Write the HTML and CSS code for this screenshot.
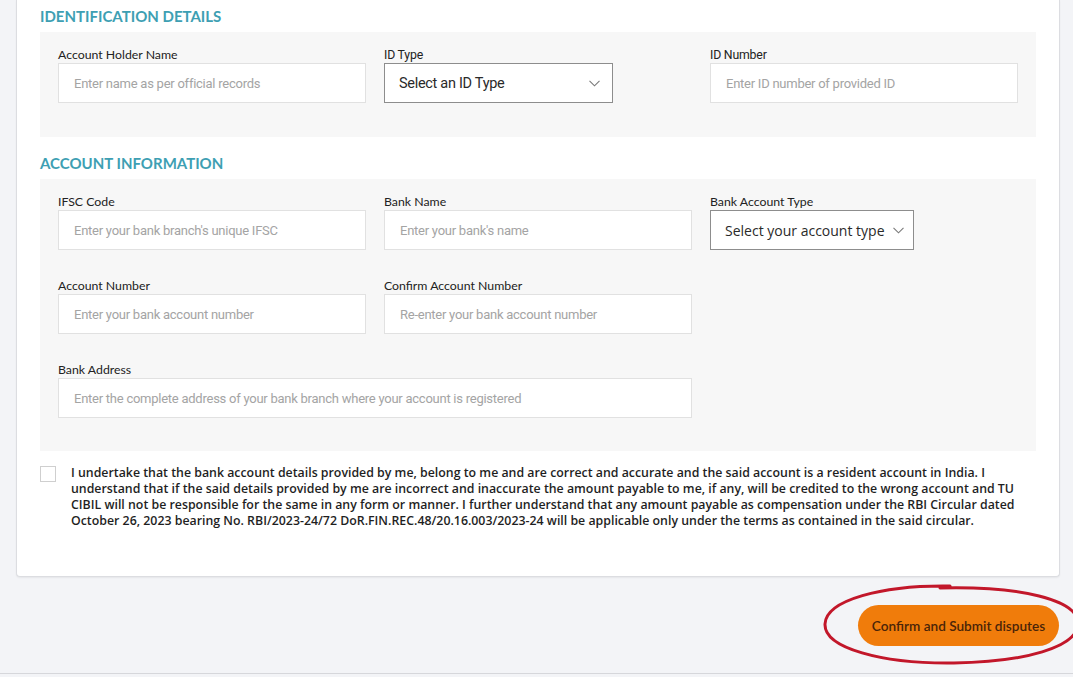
FILE: index.html
```html
<!DOCTYPE html>
<html>
<head>
<meta charset="utf-8">
<link rel="stylesheet" href="styles.css">
</head>
<body>
<div class="page">
  <div class="card">
    <h2 class="section-title">IDENTIFICATION DETAILS</h2>
    <div class="panel">
      <div class="row">
        <div class="field">
          <label class="label">Account Holder Name</label>
          <div class="input"><span class="ph">Enter name as per official records</span></div>
        </div>
        <div class="field">
          <label class="label cond">ID Type</label>
          <div class="select sel-id"><span class="sel-text cond">Select an ID Type</span>
            <svg class="chev" width="11" height="7" viewBox="0 0 11 7"><path d="M0.5 0.8 L5.5 5.8 L10.5 0.8" fill="none" stroke="#7a7a7a" stroke-width="1.1"/></svg>
          </div>
        </div>
        <div class="field">
          <label class="label cond">ID Number</label>
          <div class="input"><span class="ph">Enter ID number of provided ID</span></div>
        </div>
      </div>
    </div>

    <h2 class="section-title second">ACCOUNT INFORMATION</h2>
    <div class="panel panel-account">
      <div class="row">
        <div class="field">
          <label class="label">IFSC Code</label>
          <div class="input"><span class="ph">Enter your bank branch's unique IFSC</span></div>
        </div>
        <div class="field">
          <label class="label">Bank Name</label>
          <div class="input"><span class="ph">Enter your bank's name</span></div>
        </div>
        <div class="field">
          <label class="label">Bank Account Type</label>
          <div class="select sel-acct"><span class="sel-text">Select your account type</span>
            <svg class="chev" width="11" height="7" viewBox="0 0 11 7"><path d="M0.5 0.8 L5.5 5.8 L10.5 0.8" fill="none" stroke="#7a7a7a" stroke-width="1.1"/></svg>
          </div>
        </div>
      </div>
      <div class="row">
        <div class="field">
          <label class="label">Account Number</label>
          <div class="input"><span class="ph">Enter your bank account number</span></div>
        </div>
        <div class="field">
          <label class="label">Confirm Account Number</label>
          <div class="input"><span class="ph">Re-enter your bank account number</span></div>
        </div>
      </div>
      <div class="row">
        <div class="field wide">
          <label class="label">Bank Address</label>
          <div class="input"><span class="ph">Enter the complete address of your bank branch where your account is registered</span></div>
        </div>
      </div>
    </div>

    <div class="consent">
      <span class="checkbox"></span>
      <p class="consent-text">I undertake that the bank account details provided by me, belong to me and are correct and accurate and the said account is a resident account in India. I understand that if the said details provided by me are incorrect and inaccurate the amount payable to me, if any, will be credited to the wrong account and TU CIBIL will not be responsible for the same in any form or manner. I further understand that any amount payable as compensation under the RBI Circular dated October 26, 2023 bearing No. RBI/2023-24/72 DoR.FIN.REC.48/20.16.003/2023-24 will be applicable only under the terms as contained in the said circular.</p>
    </div>
  </div>

  <div class="actions">
    <button class="submit">Confirm and Submit disputes</button>
    <svg class="annot" width="260" height="86" viewBox="0 0 260 86">
      <path d="M128 4 C 60 3, 4 18, 3 42 C 2 66, 60 82, 132 81 C 200 80, 258 66, 256 40 C 254 18, 200 4, 118 6" fill="none" stroke="#c2172a" stroke-width="3" stroke-linecap="round"/>
    </svg>
  </div>
  <div class="footer-line"></div>
</div>
</body>
</html>
```
FILE: styles.css
```css
* { box-sizing: border-box; }
html, body { margin: 0; padding: 0; }
body {
  background: #f3f4f7;
  font-family: "Lato", "Noto Sans", sans-serif;
  color: #222;
  width: 1073px;
  height: 677px;
  overflow: hidden;
}
.page {
  position: relative;
  height: 677px;
}
.card {
  margin-left: 16px;
  width: 1044px;
  background: #fff;
  border: 1px solid #dcdde1;
  border-top: none;
  border-radius: 0 0 4px 4px;
  box-shadow: 0 1px 2px rgba(0,0,0,0.06);
  padding: 6px 0 47px 23px;
}
.section-title {
  margin: 0 0 6px 0;
  font-size: 15px;
  line-height: 20px;
  font-weight: 700;
  color: #3e9fb3;
  letter-spacing: 0;
}
.section-title.second { margin-top: 16px; }
.panel {
  width: 996px;
  background: #f7f7f7;
  padding: 15px 18px 34px 18px;
  display: flex;
  flex-direction: column;
  gap: 28px;
}
.panel-account { padding-bottom: 33px; }
.row {
  display: flex;
  gap: 18px;
}
.field {
  display: flex;
  flex-direction: column;
  width: 308px;
}
.field.wide { width: 634px; }
.label {
  font-family: "Lato", "Open Sans", sans-serif;
  font-size: 12.3px;
  line-height: 16px;
  color: #222;
}
.label.cond {
  font-family: "Roboto", "Liberation Sans", sans-serif;
  font-size: 12.3px;
  letter-spacing: -0.2px;
}
.sel-text.cond {
  font-family: "Roboto", "Liberation Sans", sans-serif;
}
.input {
  height: 40px;
  background: #fff;
  border: 1px solid #e1e1e1;
  display: flex;
  align-items: center;
  padding-left: 15px;
}
.ph {
  font-family: "Roboto", "Liberation Sans", sans-serif;
  font-size: 13px;
  color: #a4a4a4;
  letter-spacing: -0.25px;
}
.select {
  height: 40px;
  background: #fff;
  border: 1px solid #8d8d8d;
  display: flex;
  align-items: center;
  justify-content: space-between;
  padding: 0 12px 0 14px;
}
.sel-id { width: 229px; }
.sel-acct { width: 204px; padding-right: 9px; }
.sel-text {
  font-family: "Open Sans", "Lato", sans-serif;
  font-size: 14px;
  color: #2a2a2a;
}
.sel-id .sel-text { font-size: 14.5px; letter-spacing: -0.3px; }
.chev { display: block; }
.consent {
  display: flex;
  align-items: flex-start;
  gap: 15px;
  margin-top: 14px;
  padding-right: 36px;
}
.checkbox {
  flex: none;
  width: 16px;
  height: 16px;
  border: 1px solid #cfcfcf;
  background: #fff;
  margin-top: 1px;
}
.consent-text {
  margin: 0;
  font-family: "Open Sans", "Lato", sans-serif;
  font-size: 12.35px;
  line-height: 16px;
  font-weight: 600;
  color: #1f1f1f;
}
.actions {
  position: relative;
  display: flex;
  justify-content: flex-end;
  margin-right: 14px;
  margin-top: 28px;
}
.submit {
  width: 201px;
  height: 41px;
  border: none;
  border-radius: 21px;
  background: #f07c0b;
  color: #4a2408;
  font-family: "Lato", "Noto Sans", sans-serif;
  font-size: 13.6px;
  font-weight: 600;
  padding: 0;
}
.annot {
  position: absolute;
  left: 822px;
  top: -23px;
  pointer-events: none;
}
.footer-line {
  position: absolute;
  left: 0;
  right: 0;
  top: 673px;
  height: 1px;
  background: #d6d7db;
}
```
